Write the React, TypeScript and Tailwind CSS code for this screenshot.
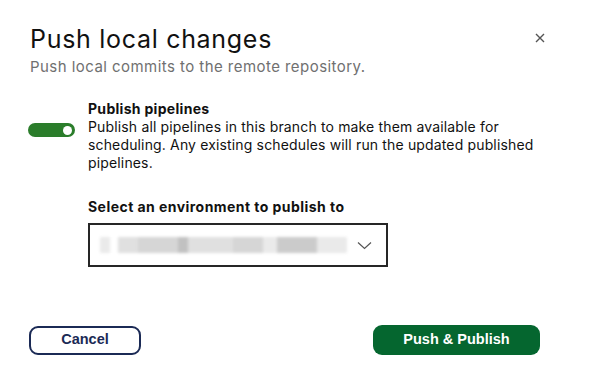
import React from "react";

export default function App() {
  return (
    <div className="w-[594px] h-[385px] bg-white relative overflow-hidden" style={{ fontFamily: "Inter, 'Liberation Sans', sans-serif" }}>
      <div className="flex flex-col h-full pl-[30px] pr-[46px] pt-[24px]">
        <div className="flex justify-between items-start">
          <div className="flex flex-col">
            <h1 className="text-[25px] leading-[30px] text-[#111] tracking-[0.7px]">Push local changes</h1>
            <p className="text-[15px] leading-[20px] text-[#707070] mt-[3px] tracking-[0.45px]">Push local commits to the remote repository.</p>
          </div>
          <button className="mt-[6px] text-[#444] w-[16px] h-[16px] flex items-center justify-center">
            <svg width="10" height="10" viewBox="0 0 10 10" stroke="#555" strokeWidth="1.4" fill="none">
              <path d="M1 1 L9 9 M9 1 L1 9" />
            </svg>
          </button>
        </div>

        <div className="flex items-start mt-[23px]">
          <div className="w-[47px] h-[14px] rounded-full bg-[#2b7d2b] flex items-center justify-end pr-[3px] mt-[23px] ml-[-2px] shrink-0">
            <div className="w-[9px] h-[9px] rounded-full bg-white" />
          </div>
          <div className="ml-[13px] flex flex-col">
            <div className="text-[14px] leading-[18px] font-bold text-[#111] tracking-[0.3px]">Publish pipelines</div>
            <div className="text-[14px] leading-[18px] text-[#111] w-[470px] tracking-[0.15px]">
              Publish all pipelines in this branch to make them available for scheduling. Any existing schedules will run the updated published pipelines.
            </div>
          </div>
        </div>

        <div className="ml-[58px] mt-[26px] flex flex-col">
          <div className="text-[14px] leading-[18px] font-bold text-[#111] tracking-[0.45px]">Select an environment to publish to</div>
          <div className="mt-[7px] w-[300px] h-[44px] border-2 border-[#262626] flex items-center justify-between pl-[10px] pr-[14px]">
            <div className="flex gap-0 h-[16px] w-[250px] blur-[1.5px] opacity-60">
              <div className="w-[10px] bg-[#ddd]" />
              <div className="w-[8px] bg-white" />
              <div className="w-[20px] bg-[#ccc]" />
              <div className="w-[40px] bg-[#bbb]" />
              <div className="w-[10px] bg-[#999]" />
              <div className="w-[45px] bg-[#ccc]" />
              <div className="w-[30px] bg-[#bbb]" />
              <div className="w-[14px] bg-[#ddd]" />
              <div className="w-[40px] bg-[#aaa]" />
              <div className="w-[30px] bg-[#ddd]" />
            </div>
            <svg width="15" height="9" viewBox="0 0 15 9" fill="none" stroke="#555" strokeWidth="1.2">
              <path d="M1 1.5 L7.5 7.5 L14 1.5" />
            </svg>
          </div>
        </div>

        <div className="flex justify-between items-center mt-[58px] ml-[-1px] pr-[8px]">
          <button className="w-[112px] h-[29px] rounded-[9px] border-2 border-[#1b2a55] text-[#1b2a55] text-[14.5px] font-bold" style={{ fontFamily: "'Liberation Sans', Arial, sans-serif" }}>
            Cancel
          </button>
          <button className="w-[167px] h-[30px] rounded-[9px] bg-[#05662f] text-white text-[14.5px] font-bold" style={{ fontFamily: "'Liberation Sans', Arial, sans-serif" }}>
            Push &amp; Publish
          </button>
        </div>
      </div>
    </div>
  );
}
